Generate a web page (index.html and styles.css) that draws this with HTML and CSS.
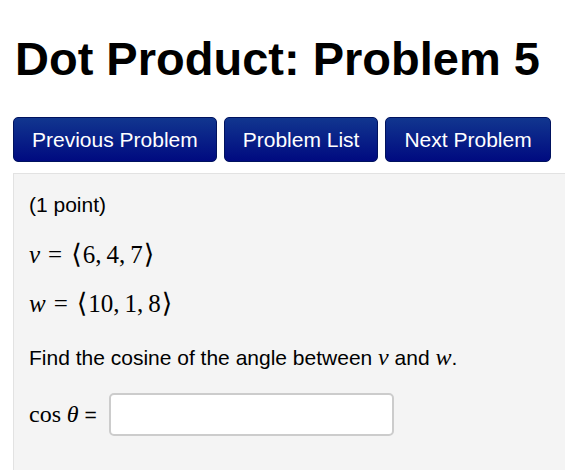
FILE: index.html
```html
<!DOCTYPE html>
<html>
<head>
<meta charset="utf-8">
<link rel="stylesheet" href="styles.css">
</head>
<body>
<div class="page">
  <h1 class="title">Dot Product: Problem 5</h1>
  <div class="nav">
    <a class="btn">Previous Problem</a>
    <a class="btn">Problem List</a>
    <a class="btn">Next Problem</a>
  </div>
  <div class="panel">
    <p class="points">(1 point)</p>
    <p class="math-line"><span class="mi">v</span><span class="mo">=</span><span class="br">⟨</span>6,<span class="sp"></span>4,<span class="sp"></span>7<span class="br">⟩</span></p>
    <p class="math-line second"><span class="mi">w</span><span class="mo">=</span><span class="br">⟨</span>10,<span class="sp"></span>1,<span class="sp"></span>8<span class="br">⟩</span></p>
    <p class="question">Find the cosine of the angle between <span class="mi inl">v</span> and <span class="mi inl">w</span>.</p>
    <div class="answer">
      <span class="label"><span class="fn">cos</span> <span class="mi inl">θ</span> =</span>
      <input class="field" type="text">
    </div>
  </div>
</div>
</body>
</html>
```

FILE: styles.css
```css
html, body {
  margin: 0;
  padding: 0;
  background: #ffffff;
}

body {
  font-family: "Liberation Sans", Arial, sans-serif;
  color: #000;
}

.page {
  padding-left: 13px;
}

.title {
  margin: 32px 0 0 2px;
  font-size: 47px;
  line-height: 54px;
  font-weight: bold;
}

.nav {
  display: flex;
  gap: 7px;
  margin-top: 31px;
}

.btn {
  display: block;
  padding: 10px 18px;
  font-size: 21px;
  line-height: 23px;
  color: #ffffff;
  background: linear-gradient(to bottom, #11368f, #000a80);
  border: 1px solid #00125e;
  border-radius: 5px;
}

.panel {
  margin-top: 11px;
  background: #f4f4f4;
  border: 1px solid #e2e2e2;
  border-right: none;
  padding: 19px 0 30px 15px;
  min-height: 260px;
}

.panel p {
  margin: 0;
}

.points, .question {
  font-size: 21px;
  line-height: 24px;
}

.math-line {
  font-family: "Liberation Serif", "DejaVu Serif", serif;
  font-size: 25px;
  line-height: 30px;
  margin-top: 22px !important;
}

.math-line.second {
  margin-top: 18px !important;
}

.mi {
  font-family: "Liberation Serif", "DejaVu Serif", serif;
  font-style: italic;
}

.mi.inl {
  font-size: 24px;
}

.mo {
  margin: 0 8px;
}

.br {
  font-family: "DejaVu Serif", "Liberation Serif", serif;
  font-size: 27px;
  margin: 0 1px;
}

.sp {
  display: inline-block;
  width: 5px;
}

.question {
  margin-top: 26px !important;
}

.answer {
  display: flex;
  align-items: center;
  margin-top: 23px;
  font-size: 21px;
}

.label {
  white-space: pre;
}

.fn {
  font-family: "Liberation Serif", "DejaVu Serif", serif;
  font-size: 24px;
}

.field {
  margin-left: 12px;
  width: 285px;
  height: 43px;
  box-sizing: border-box;
  border: 2px solid #cccccc;
  border-radius: 5px;
  background: #ffffff;
  padding: 0 8px;
  font-size: 18px;
}
```
